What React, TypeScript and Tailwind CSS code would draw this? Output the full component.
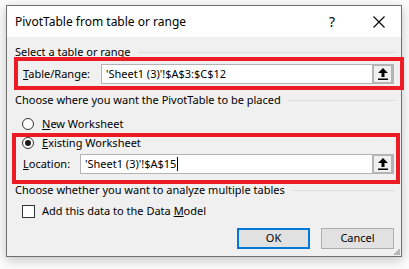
const font = { fontFamily: '"Noto Sans", "Open Sans", sans-serif' };

const UpButton = () => (
  <div className="w-[21px] h-[20px] border-2 border-[#b4b4b4] bg-[#f0f0f0] flex items-center justify-center shrink-0">
    <svg width="10" height="12" viewBox="0 0 10 12">
      <path d="M5 0 L10 5 L6.5 5 L6.5 9 L3.5 9 L3.5 5 L0 5 Z" fill="#000" />
      <rect x="0" y="10.5" width="10" height="1.5" fill="#000" />
    </svg>
  </div>
);

const SectionHeader = ({ text, className }: { text: string; className: string }) => (
  <div className={`flex items-center h-[16px] pl-[8px] pr-[6px] ${className}`}>
    <span className="whitespace-nowrap">{text}</span>
    <div className="flex-1 h-px bg-[#dcdcdc] ml-[7px]" />
  </div>
);

const App = () => {
  return (
    <div className="relative w-[409px] h-[269px] bg-[#fbfbfb] pt-[5px] pl-[6px] text-[11px] text-black" style={font}>
      <div className="w-[396px] h-[252px] border border-[#707070] bg-[#f0f0f0] flex flex-col shadow-[0_3px_10px_rgba(0,0,0,0.22)]">
        {/* title bar */}
        <div className="h-[31px] bg-white flex items-center pl-[8px] shrink-0">
          <span className="text-[12px]">PivotTable from table or range</span>
          <span className="ml-auto text-[14px] mr-[38px]">?</span>
          <svg width="12" height="12" viewBox="0 0 12 12" className="mr-[16px]">
            <path d="M0.5 0.5 L11.5 11.5 M11.5 0.5 L0.5 11.5" stroke="#000" strokeWidth="1.1" />
          </svg>
        </div>

        {/* body */}
        <div className="flex flex-col pt-[7px]">
          <SectionHeader text="Select a table or range" className="" />

          <div className="flex items-center h-[20px] mt-[4px] pl-[16px] pr-[7px]">
            <span className="w-[78px]">
              <span className="underline">T</span>able/Range:
            </span>
            <div className="flex-1 h-[20px] bg-white border border-[#b4b4b4] flex items-center pl-[4px]">
              <span className="flex-1">'Sheet1 (3)'!$A$3:$C$12</span>
              <UpButton />
            </div>
          </div>

          <SectionHeader text="Choose where you want the PivotTable to be placed" className="mt-[8px]" />

          <div className="flex items-center h-[16px] mt-[8px] pl-[15px]">
            <div className="w-[12px] h-[12px] rounded-full border border-[#333] bg-white" />
            <span className="ml-[8px]">
              <span className="underline">N</span>ew Worksheet
            </span>
          </div>

          <div className="flex items-center h-[16px] mt-[3px] pl-[15px]">
            <div className="w-[12px] h-[12px] rounded-full border border-[#333] bg-white flex items-center justify-center">
              <div className="w-[6px] h-[6px] rounded-full bg-[#1a1a1a]" />
            </div>
            <span className="ml-[8px]">
              <span className="underline">E</span>xisting Worksheet
            </span>
          </div>

          <div className="flex items-center h-[20px] mt-[3px] pl-[16px] pr-[7px]">
            <span className="w-[57px]">
              <span className="underline">L</span>ocation:
            </span>
            <div className="flex-1 h-[20px] bg-white border border-[#b4b4b4] flex items-center pl-[4px]">
              <span>'Sheet1 (3)'!$A$15</span>
              <div className="w-px h-[14px] bg-black ml-px" />
              <div className="flex-1" />
              <UpButton />
            </div>
          </div>

          <SectionHeader text="Choose whether you want to analyze multiple tables" className="mt-[8px]" />

          <div className="flex items-center h-[16px] mt-[5px] pl-[15px]">
            <div className="w-[13px] h-[13px] border border-[#333] bg-white" />
            <span className="ml-[7px]">
              Add this data to the Data <span className="underline">M</span>odel
            </span>
          </div>

          <div className="flex justify-end h-[21px] mt-[9px] pr-[7px] gap-[11px]">
            <button className="w-[73px] h-[21px] border-2 border-[#0078d7] bg-[#e1e1e1] flex items-center justify-center">
              OK
            </button>
            <button className="w-[73px] h-[21px] border border-[#adadad] bg-[#e1e1e1] flex items-center justify-center">
              Cancel
            </button>
          </div>
        </div>
      </div>

      {/* resize grip */}
      <svg width="6" height="6" viewBox="0 0 6 6" className="absolute left-[394px] top-[249px]">
        <rect x="4" y="0" width="2" height="2" fill="#b8b8b8" />
        <rect x="2" y="2" width="2" height="2" fill="#b8b8b8" />
        <rect x="4" y="2" width="2" height="2" fill="#b8b8b8" />
        <rect x="0" y="4" width="2" height="2" fill="#b8b8b8" />
        <rect x="2" y="4" width="2" height="2" fill="#b8b8b8" />
        <rect x="4" y="4" width="2" height="2" fill="#b8b8b8" />
      </svg>

      {/* red highlight overlays */}
      <div className="absolute left-[14px] top-[57px] w-[390px] h-[33px] border-[4px] border-[#ed1c24]" />
      <div className="absolute left-[12px] top-[133px] w-[388px] h-[51px] border-[4px] border-[#ed1c24]" />
    </div>
  );
};

export default App;
